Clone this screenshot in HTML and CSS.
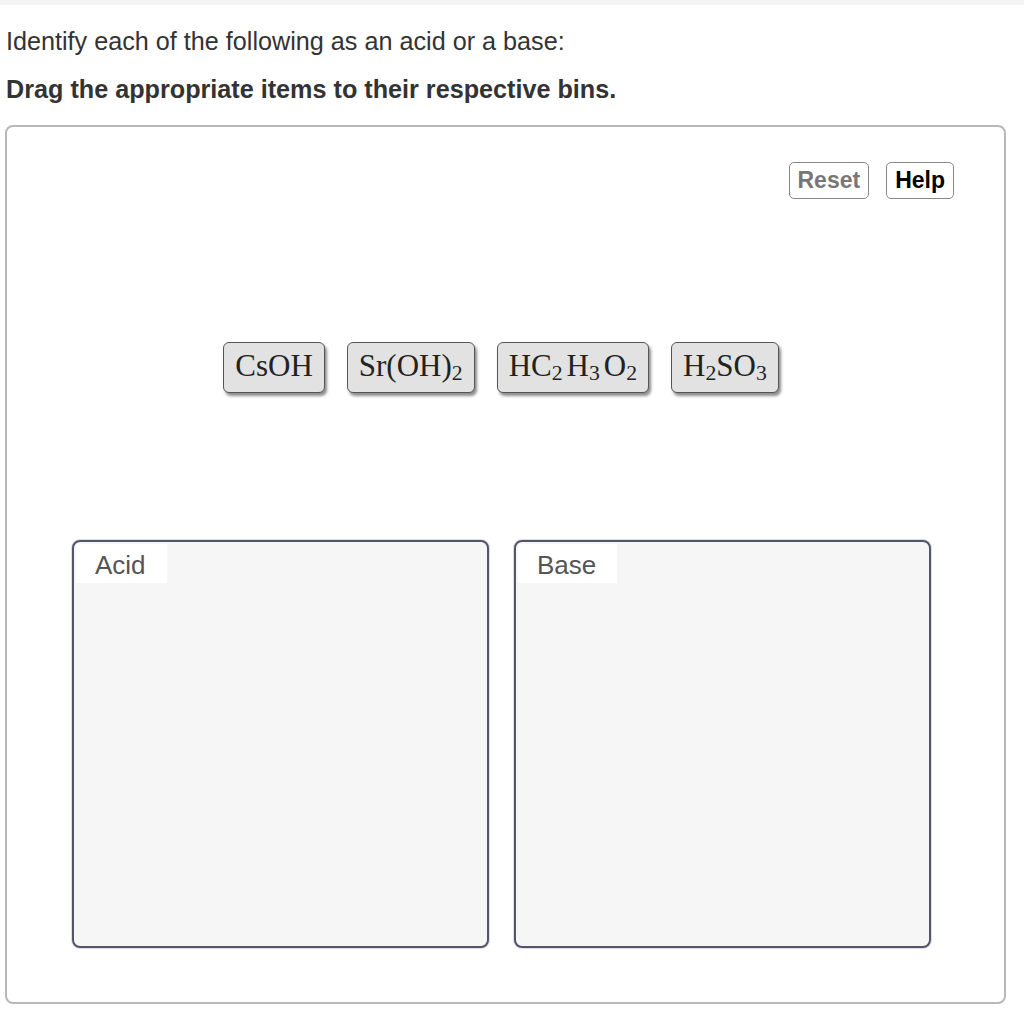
FILE: index.html
```html
<!DOCTYPE html>
<html lang="en-US">
	<head>
		<meta charset="utf-8">
		<title>Acid or Base</title>
		<link rel="stylesheet" href="styles.css">
	</head>
	<body>
		<div class=topbar></div>
		<p class=prompt>Identify each of the following as an acid or a base:</p>
		<p class="prompt instruction">Drag the appropriate items to their respective bins.</p>
		<div class=box>
			<div class=toolbar>
				<button type=button class="tool reset">Reset</button>
				<button type=button class="tool help">Help</button>
			</div>
			<div class=chips>
				<div class=chip>CsOH</div>
				<div class=chip>Sr(OH)<sub>2</sub></div>
				<div class=chip>HC<sub class=gap>2</sub>H<sub class=gap>3</sub>O<sub>2</sub></div>
				<div class=chip>H<sub>2</sub>SO<sub>3</sub></div>
			</div>
			<div class=bins>
				<div class=bin>
					<div class=binLabel>Acid</div>
				</div>
				<div class=bin>
					<div class=binLabel>Base</div>
				</div>
			</div>
		</div>
	</body>
</html>
```

FILE: styles.css
```css
* {
	box-sizing:border-box;
}
body {
	margin:0;
	font-family:"Liberation Sans", Arial, sans-serif;
	color:#333;
	background:#fff;
}
.topbar {
	height:5px;
	background:#f4f4f4;
}
.prompt {
	margin:21px 0 0;
	padding-left:6px;
	font-size:25.2px;
	line-height:30px;
}
.instruction {
	margin-top:18px;
	font-weight:bold;
}
.box {
	margin:21px 0 0 5px;
	width:1001px;
	height:879px;
	border:2px solid #b8b8b8;
	border-radius:8px;
	padding:35px 50px 0 0;
}
.toolbar {
	display:flex;
	justify-content:flex-end;
	gap:17px;
}
.tool {
	height:37px;
	padding:0 8px;
	border:1.5px solid #888;
	border-radius:5px;
	background:#fff;
	font-family:"Liberation Sans", Arial, sans-serif;
	font-weight:bold;
	font-size:23px;
}
.reset {
	color:#777;
}
.help {
	color:#000;
}
.chips {
	display:flex;
	justify-content:center;
	gap:22px;
	margin-top:143px;
	padding-left:41px;
}
.chip {
	height:51px;
	line-height:46px;
	padding:0 11px;
	background:#e2e2e2;
	border:1.5px solid #555;
	border-radius:6px;
	box-shadow:2px 3px 3px rgba(0,0,0,0.45);
	font-family:"Liberation Serif", "Times New Roman", serif;
	font-size:31px;
	color:#222;
	white-space:nowrap;
}
.chip sub {
	font-size:0.7em;
	vertical-align:-0.2em;
	line-height:0;
}
.chip sub.gap {
	margin-right:4px;
}
.bins {
	display:flex;
	justify-content:center;
	gap:25px;
	margin-top:147px;
	padding-left:42px;
}
.bin {
	width:417px;
	height:408px;
	background:#f6f6f6;
	border:2px solid #55556a;
	border-radius:8px;
	box-shadow:0 0 0 1px #dcdcf0;
	padding:2px;
}
.binLabel {
	display:inline-block;
	height:39px;
	line-height:35px;
	padding:4px 21px 0 19px;
	background:#fff;
	font-size:26px;
	color:#555;
}
```
